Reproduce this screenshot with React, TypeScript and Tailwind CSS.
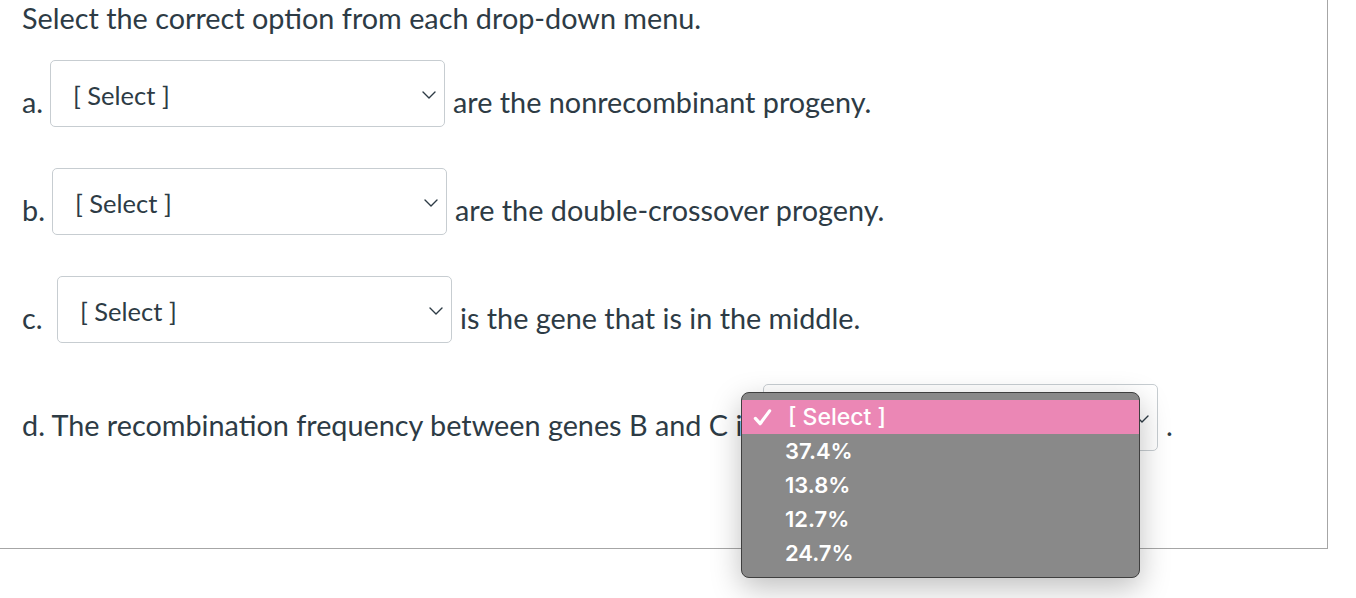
const rows = [
  { label: "a.", text: "are the nonrecombinant progeny.", labelW: "w-[20px]" },
  { label: "b.", text: "are the double-crossover progeny.", labelW: "w-[22px]" },
  { label: "c.", text: "is the gene that is in the middle.", labelW: "w-[27px]" },
];

const options = ["37.4%", "13.8%", "12.7%", "24.7%"];

// the d. select sits under the open menu, so its own label is covered
function SelectBox({ covered }: { covered?: boolean }) {
  return (
    <div className="flex h-[67px] w-[395px] shrink-0 items-start justify-between rounded-[5px] border border-[#c7cdd1] bg-white pl-[22px] pr-[8px] pt-[19px]">
      <span className="text-[25.5px] leading-[30px] text-[#2d3b45]">{covered ? "" : "[ Select ]"}</span>
      <svg viewBox="0 0 14 8" className="mt-[11px] h-[8px] w-[14px]" fill="none" stroke="#2d3b45" strokeWidth={1.4} strokeLinecap="round" strokeLinejoin="round">
        <path d="M1 1l6 6 6-6" />
      </svg>
    </div>
  );
}

export default function App() {
  return (
    <div className="relative h-[598px] w-[1356px] overflow-hidden bg-white font-['Lato','Noto_Sans',sans-serif] text-[#2d3b45]">
      <div className="h-[549px] w-[1328px] border-b border-r border-[#a6a6a6] pl-[22px] pt-[3px]">
        <p className="text-[28.8px] leading-[30px]">Select the correct option from each drop-down menu.</p>

        <div className="mt-[27px] flex flex-col gap-[41px]">
          {rows.map((row) => (
            <div key={row.label} className="flex items-start gap-[8px]">
              <span className={`mt-[27px] shrink-0 text-[28.8px] leading-[30px] ${row.labelW}`}>{row.label}</span>
              <SelectBox />
              <span className="mt-[27px] whitespace-nowrap text-[28.8px] leading-[30px]">{row.text}</span>
            </div>
          ))}
          <div className="flex items-start gap-[8px]">
            <span className="mt-[26px] w-[733px] shrink-0 whitespace-nowrap text-[28.8px] leading-[30px]">
              d. The recombination frequency between genes B and C is
            </span>
            <SelectBox covered />
            <span className="mt-[26px] text-[28.8px] leading-[30px]">.</span>
          </div>
        </div>
      </div>

      <div className="absolute left-[741px] top-[392px] h-[186px] w-[399px] rounded-[8px] border border-[#3f3f3f] bg-[#898989] py-[7px] font-['Inter','Liberation_Sans',sans-serif] text-white shadow-[0_10px_30px_rgba(0,0,0,0.25)]">
        <div className="flex h-[34px] items-center bg-[#eb87b5] pl-[11px]">
          <svg viewBox="0 0 20 20" className="h-[19px] w-[19px]" fill="none" stroke="white" strokeWidth={3.4} strokeLinecap="round" strokeLinejoin="round">
            <path d="M2.5 11l5 5.5L17.5 3" />
          </svg>
          <span className="ml-[16px] text-[23px] font-medium leading-none">[ Select ]</span>
        </div>
        {options.map((o) => (
          <div key={o} className="flex h-[34px] items-center pl-[43px] text-[22px] font-semibold leading-none">
            {o}
          </div>
        ))}
      </div>
    </div>
  );
}
